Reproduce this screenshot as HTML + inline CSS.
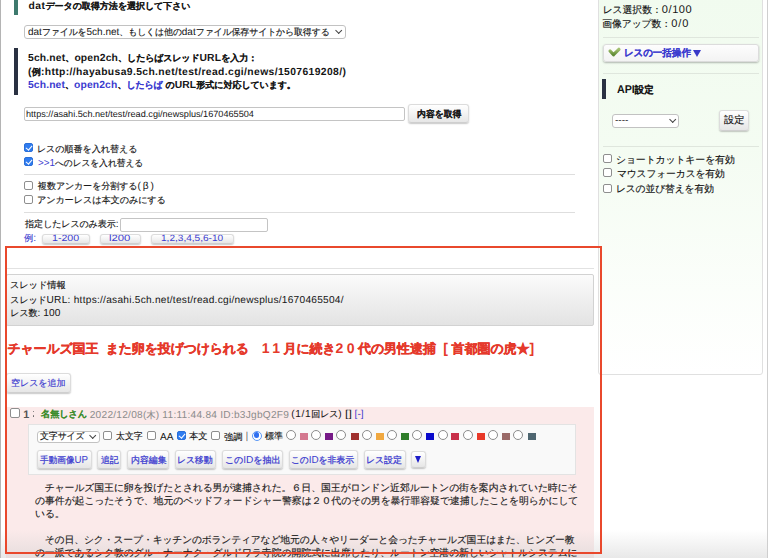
<!DOCTYPE html>
<html lang="ja">
<head>
<meta charset="utf-8">
<style>
*{box-sizing:border-box;margin:0;padding:0}
html,body{width:768px;height:558px;overflow:hidden;background:#fff}
body{font-family:"Liberation Sans", sans-serif;color:#222;position:relative;text-rendering:geometricPrecision}
.a{position:absolute}
.tx{position:absolute;white-space:nowrap;line-height:14px;height:14px;transform-origin:0 50%}
.tx i{display:inline-block;font-style:normal;width:1em;text-align:center}
.tx{-webkit-text-stroke:0.15px currentColor}
.tx.bd{-webkit-text-stroke:0.05px currentColor}
#title{-webkit-text-stroke:0.3px currentColor}
.tx[id^=bt]{-webkit-text-stroke:0.25px currentColor}
.tx .L{-webkit-text-stroke:0}
</style>
</head>
<body>
<div class="box">
<style>
.cb{position:absolute;width:9px;height:9px;border:1px solid #8e8e8e;border-radius:2px;background:#fff}
.cb.on{background:#2f7cf0;border-color:#2a6fd8}
.cb.on::after{content:"";position:absolute;left:2.2px;top:0.3px;width:2.6px;height:5.2px;border:solid #fff;border-width:0 1.6px 1.6px 0;transform:rotate(40deg)}
.ln{position:absolute;height:1px;background:#dedede}
.btn{position:absolute;border:1px solid #dcdcdc;border-bottom-color:#cfcfcf;border-radius:3px;background:linear-gradient(#ffffff,#f3f3f3 50%,#e6e6e6);box-shadow:0 1px 1.5px rgba(0,0,0,.22)}
.sel{position:absolute;border:1px solid #c2c2c2;border-radius:3px;background:#fff}
.chev{position:absolute;width:5.4px;height:5.4px;margin:-0.5px 0 0 -1px;border:solid #444;border-width:0 1.2px 1.2px 0;transform:rotate(45deg)}
.inp{position:absolute;border:1px solid #c4c4c4;border-radius:2px;background:#fff}
.rd{position:absolute;width:10px;height:10px;border:1px solid #8c8c8c;border-radius:50%;background:#fff}
.rd.on{border:1.4px solid #5a98f6}
.rd.on::after{content:"";position:absolute;left:0.8px;top:0.8px;width:5.4px;height:5.4px;border-radius:50%;background:#2f6ff0}
.sq{position:absolute;width:8px;height:7px;top:433px}
</style>
<!-- frame lines -->
<div class="a" style="left:0;top:0;width:1px;height:558px;background:#b4b4b4"></div>
<div class="a" style="left:767px;top:0;width:1px;height:558px;background:#cfcfcf"></div>

<!-- section 1 -->
<div class="a" style="left:14px;top:0;width:4px;height:15px;background:#3e7a6e"></div>
<div class="sel" style="left:24px;top:25px;width:321.5px;height:13.5px"></div>
<div class="chev" style="left:336.5px;top:28.5px"></div>
<div class="a" style="left:14px;top:48px;width:4px;height:47px;background:#2a3142"></div>
<div class="inp" style="left:24px;top:107px;width:381px;height:14px"></div>
<div class="btn" style="left:408px;top:104px;width:61px;height:19px"></div>

<div class="cb on" style="left:24px;top:143px"></div>
<div class="cb on" style="left:24px;top:157px"></div>
<div class="ln" style="left:24px;top:174px;width:551px"></div>
<div class="cb" style="left:24px;top:180.5px"></div>
<div class="cb" style="left:24px;top:195px"></div>
<div class="ln" style="left:24px;top:212px;width:551px"></div>
<div class="inp" style="left:120px;top:218px;width:148px;height:14px"></div>
<div class="btn" style="left:42px;top:233.5px;width:48px;height:10.5px;border-radius:3px"></div>
<div class="btn" style="left:100px;top:233.5px;width:41px;height:10.5px;border-radius:3px"></div>
<div class="btn" style="left:151px;top:233.5px;width:83px;height:10.5px;border-radius:3px"></div>

<!-- sidebar -->
<div class="a" style="left:598px;top:-6px;width:165px;height:381px;border:1px solid #e0e0e0;border-radius:0 0 3px 3px;background:linear-gradient(#f1fbef 0%,#f4fcf2 40%,#ffffff 100%)"></div>
<div class="ln" style="left:603px;top:37px;width:156px;background:#dfe6dd"></div>
<div class="a" style="left:603px;top:44px;width:156px;height:18px;border:1px solid #dcdcdc;border-radius:3px;background:linear-gradient(#fdfdfd,#f3f3f3);box-shadow:0 1px 2px rgba(0,0,0,.28)"></div>
<svg class="a" style="left:604px;top:42px" width="24" height="20" viewBox="0 0 24 20"><defs><linearGradient id="gk" x1="0" y1="0" x2="0" y2="1"><stop offset="0" stop-color="#a2c070"/><stop offset="1" stop-color="#5f8a34"/></linearGradient></defs><path d="M6.1 9 L9.5 12.7 L14.9 7.3" fill="none" stroke="url(#gk)" stroke-width="3.3" stroke-linecap="round" stroke-linejoin="round"/></svg>
<div class="ln" style="left:603px;top:73px;width:156px;background:#dfe6dd"></div>
<div class="a" style="left:602px;top:79px;width:4px;height:20px;background:#2a3142"></div>
<div class="sel" style="left:612px;top:113.5px;width:67px;height:14px"></div>
<div class="chev" style="left:670.5px;top:117px"></div>
<div class="btn" style="left:719px;top:110px;width:30px;height:21px"></div>
<div class="ln" style="left:603px;top:146px;width:156px;background:#dfe6dd"></div>
<div class="cb" style="left:602.5px;top:153.5px"></div>
<div class="cb" style="left:602.5px;top:168px"></div>
<div class="cb" style="left:602.5px;top:183.5px"></div>

<!-- thread -->
<div class="ln" style="left:7px;top:268px;width:587px;background:#e2e2e2"></div>
<div class="a" style="left:6px;top:273.5px;width:587.5px;height:52px;border:1px solid #d2d2d2;border-radius:2px;background:linear-gradient(#fbfbfb,#e3e3e3)"></div>
<div class="btn" style="left:6px;top:373px;width:65px;height:19.5px"></div>

<!-- post -->
<div class="a" style="left:6px;top:407px;width:588px;height:160px;background:#fbeaea"></div>
<div class="cb" style="left:10px;top:408px;width:10px;height:9.5px"></div>
<div class="a" style="left:32.8px;top:410.6px;width:1.6px;height:1.6px;background:#666;border-radius:1px"></div><div class="a" style="left:32.8px;top:415.4px;width:1.6px;height:1.6px;background:#666;border-radius:1px"></div>
<div class="a" style="left:28px;top:424px;width:548px;height:51px;border:1px solid #e3e3e3;background:#f9f9f9"></div>
<div class="sel" style="left:37px;top:431px;width:62.5px;height:12px"></div>
<div class="chev" style="left:90.5px;top:433.5px"></div>
<div class="cb" style="left:103px;top:430.5px"></div>
<div class="cb" style="left:146.5px;top:430.5px"></div>
<div class="cb on" style="left:177px;top:431px"></div>
<div class="cb" style="left:211px;top:430.5px"></div>
<div class="rd on" style="left:252px;top:430.5px"></div>
<div class="rd" style="left:286px;top:430px"></div><div class="sq" style="left:300px;background:#d4788f"></div>
<div class="rd" style="left:311px;top:430px"></div><div class="sq" style="left:325px;background:#761a87"></div>
<div class="rd" style="left:336px;top:430px"></div><div class="sq" style="left:350.5px;background:#a0302e"></div>
<div class="rd" style="left:361.5px;top:430px"></div><div class="sq" style="left:375.5px;background:#f0a840"></div>
<div class="rd" style="left:387px;top:430px"></div><div class="sq" style="left:401px;background:#2e7d2a"></div>
<div class="rd" style="left:412px;top:430px"></div><div class="sq" style="left:426px;background:#0a0acc"></div>
<div class="rd" style="left:437.5px;top:430px"></div><div class="sq" style="left:451px;background:#c8304a"></div>
<div class="rd" style="left:462.5px;top:430px"></div><div class="sq" style="left:476.5px;background:#e83828"></div>
<div class="rd" style="left:488px;top:430px"></div><div class="sq" style="left:502px;background:#9a6a68"></div>
<div class="rd" style="left:513px;top:430px"></div><div class="sq" style="left:527.5px;background:#4e6670"></div>

<div class="btn" style="left:36.5px;top:449.5px;width:55px;height:19.5px"></div>
<div class="btn" style="left:97px;top:449.5px;width:24px;height:19.5px"></div>
<div class="btn" style="left:127px;top:449.5px;width:41.5px;height:19.5px"></div>
<div class="btn" style="left:174.5px;top:449.5px;width:41.5px;height:19.5px"></div>
<div class="btn" style="left:222px;top:449.5px;width:60.5px;height:19.5px"></div>
<div class="btn" style="left:289px;top:449.5px;width:68.5px;height:19.5px"></div>
<div class="btn" style="left:363.5px;top:449.5px;width:42px;height:19.5px"></div>
<div class="btn" style="left:411px;top:450.5px;width:14.5px;height:17.5px"></div>
<div class="a" style="left:414.5px;top:456px;width:0;height:0;border-left:3.6px solid transparent;border-right:3.6px solid transparent;border-top:7.2px solid #1c1cc8"></div>
<div class="a" style="left:693.3px;top:49.8px;width:0;height:0;border-left:4.4px solid transparent;border-right:4.4px solid transparent;border-top:7.4px solid #3838c8"></div>
<div class="a" style="left:0;top:530px;width:768px;height:28px;background:linear-gradient(rgba(225,225,225,0),rgba(205,205,205,.45))"></div>

</div>
<div class="tx bd" id="t1" style="left:28.42px;top:-0.68px;font-size:9.06px;font-weight:bold;color:#151515"><span class="L" style="font-size:1.140em;letter-spacing:0.540px">dat</span><i>デ</i><i>ー</i><i>タ</i><i>の</i><i>取</i><i>得</i><i>方</i><i>法</i><i>を</i><i>選</i><i>択</i><i>し</i><i>て</i><i>下</i><i>さ</i><i>い</i></div>
<div class="tx" id="sel1" style="left:27.86px;top:24.61px;font-size:9.06px;font-weight:normal;color:#151515;transform:scaleX(0.9869)"><span class="L" style="font-size:1.120em;letter-spacing:0.000px">dat</span><i>フ</i><i>ァ</i><i>イ</i><i>ル</i><i>を</i><span class="L" style="font-size:1.120em;letter-spacing:0.000px">5ch.net</span><i>、</i><i>も</i><i>し</i><i>く</i><i>は</i><i>他</i><i>の</i><span class="L" style="font-size:1.120em;letter-spacing:0.000px">dat</span><i>フ</i><i>ァ</i><i>イ</i><i>ル</i><i>保</i><i>存</i><i>サ</i><i>イ</i><i>ト</i><i>か</i><i>ら</i><i>取</i><i>得</i><i>す</i><i>る</i></div>
<div class="tx bd" id="lA" style="left:28.00px;top:50.89px;font-size:9.06px;font-weight:bold;color:#151515"><span class="L" style="font-size:1.140em;letter-spacing:0.176px">5ch.net</span><i>、</i><span class="L" style="font-size:1.140em;letter-spacing:0.176px">open2ch</span><i>、</i><i>し</i><i>た</i><i>ら</i><i>ば</i><i>ス</i><i>レ</i><i>ッ</i><i>ド</i><span class="L" style="font-size:1.140em;letter-spacing:0.176px">URL</span><i>を</i><i>入</i><i>力</i><i>：</i></div>
<div class="tx bd" id="lB" style="left:28.00px;top:64.89px;font-size:9.06px;font-weight:bold;color:#151515"><span class="L" style="font-size:1.140em;letter-spacing:0.391px">(</span><i>例</i><span class="L" style="font-size:1.140em;letter-spacing:0.391px">:http://hayabusa9.5ch.net/test/read.cgi/news/1507619208/)</span></div>
<div class="tx bd" id="lC" style="left:28.00px;top:77.61px;font-size:9.06px;font-weight:bold;color:#151515"><span style="color:#3b3bcf"><span class="L" style="font-size:1.140em;letter-spacing:0.129px">5ch.net</span></span><i>、</i><span style="color:#3b3bcf"><span class="L" style="font-size:1.140em;letter-spacing:0.129px">open2ch</span></span><i>、</i><span style="color:#3b3bcf"><i>し</i><i>た</i><i>ら</i><i>ば</i></span><span class="L" style="font-size:1.140em;letter-spacing:0.129px"> </span><i>の</i><span class="L" style="font-size:1.140em;letter-spacing:0.129px">URL</span><i>形</i><i>式</i><i>に</i><i>対</i><i>応</i><i>し</i><i>て</i><i>い</i><i>ま</i><i>す</i><i>。</i></div>
<div class="tx" id="url" style="left:25.58px;top:107.03px;font-size:9.06px;font-weight:normal;color:#151515;transform:scaleX(1.0092)"><span class="L" style="font-size:1.000em;letter-spacing:0.000px">https://asahi.5ch.net/test/read.cgi/newsplus/1670465504</span></div>
<div class="tx bd" id="bget" style="left:416.58px;top:107.17px;font-size:9.06px;font-weight:bold;color:#151515;transform:scaleX(0.9819)"><i>内</i><i>容</i><i>を</i><i>取</i><i>得</i></div>
<div class="tx" id="cb1" style="left:36.86px;top:141.59px;font-size:9.06px;font-weight:normal;color:#151515;transform:scaleX(1.0079)"><i>レ</i><i>ス</i><i>の</i><i>順</i><i>番</i><i>を</i><i>入</i><i>れ</i><i>替</i><i>え</i><i>る</i></div>
<div class="tx" id="cb2" style="left:37.86px;top:155.75px;font-size:9.06px;font-weight:normal;color:#151515;transform:scaleX(0.9739)"><span style="color:#3b3bcf"><span class="L" style="font-size:1.120em;letter-spacing:0.000px">&gt;&gt;1</span></span><i>へ</i><i>の</i><i>レ</i><i>ス</i><i>を</i><i>入</i><i>れ</i><i>替</i><i>え</i><i>る</i></div>
<div class="tx" id="cb3" style="left:37.86px;top:178.75px;font-size:9.06px;font-weight:normal;color:#151515"><i>複</i><i>数</i><i>ア</i><i>ン</i><i>カ</i><i>ー</i><i>を</i><i>分</i><i>割</i><i>す</i><i>る</i><span class="L" style="font-size:1.120em;letter-spacing:1.920px">(β)</span></div>
<div class="tx" id="cb4" style="left:36.86px;top:192.61px;font-size:9.06px;font-weight:normal;color:#151515;transform:scaleX(1.0166)"><i>ア</i><i>ン</i><i>カ</i><i>ー</i><i>レ</i><i>ス</i><i>は</i><i>本</i><i>文</i><i>の</i><i>み</i><i>に</i><i>す</i><i>る</i></div>
<div class="tx" id="shitei" style="left:24.56px;top:216.75px;font-size:9.06px;font-weight:normal;color:#151515;transform:scaleX(1.0035)"><i>指</i><i>定</i><i>し</i><i>た</i><i>レ</i><i>ス</i><i>の</i><i>み</i><i>表</i><i>示</i><span class="L" style="font-size:1.120em;letter-spacing:0.000px">:</span></div>
<div class="tx" id="rei" style="left:23.72px;top:231.33px;font-size:9.06px;font-weight:normal;color:#3b3bcf;transform:scaleX(1.0119)"><i>例</i><span class="L" style="font-size:1.120em;letter-spacing:0.000px">:</span></div>
<div class="tx" id="b1" style="left:52.14px;top:231.47px;font-size:9.06px;font-weight:normal;color:#3b3bcf;transform:scaleX(1.1743)"><span class="L" style="font-size:1.000em;letter-spacing:0.000px">1-200</span></div>
<div class="tx" id="b2" style="left:109.14px;top:231.47px;font-size:9.06px;font-weight:normal;color:#3b3bcf;transform:scaleX(1.2500)"><span class="L" style="font-size:1.000em;letter-spacing:0.000px">l200</span></div>
<div class="tx" id="b3" style="left:160.58px;top:231.47px;font-size:9.06px;font-weight:normal;color:#3b3bcf;transform:scaleX(1.1132)"><span class="L" style="font-size:1.000em;letter-spacing:0.000px">1,2,3,4,5,6-10</span></div>
<div class="tx" id="s1" style="left:602.70px;top:3.11px;font-size:9.87px;font-weight:normal;color:#151515"><i>レ</i><i>ス</i><i>選</i><i>択</i><i>数</i><i>：</i><span class="L" style="font-size:1.120em;letter-spacing:0.540px">0/100</span></div>
<div class="tx" id="s2" style="left:602.14px;top:17.39px;font-size:9.87px;font-weight:normal;color:#151515"><i>画</i><i>像</i><i>ア</i><i>ッ</i><i>プ</i><i>数</i><i>：</i><span class="L" style="font-size:1.120em;letter-spacing:0.893px">0/0</span></div>
<div class="tx bd" id="s3" style="left:623.72px;top:46.53px;font-size:9.87px;font-weight:bold;color:#3b3bcf;transform:scaleX(0.9699)"><i>レ</i><i>ス</i><i>の</i><i>一</i><i>括</i><i>操</i><i>作</i></div>
<div class="tx bd" id="s4" style="left:616.65px;top:82.75px;font-size:9.87px;font-weight:bold;color:#151515;transform:scaleX(0.9506)"><span class="L" style="font-size:1.140em;letter-spacing:0.000px">API</span><i>設</i><i>定</i></div>
<div class="tx" id="s5" style="left:615.44px;top:113.11px;font-size:9.06px;font-weight:normal;color:#151515;transform:scaleX(1.1159)"><span class="L" style="font-size:1.000em;letter-spacing:0.000px">----</span></div>
<div class="tx" id="s6" style="left:724.00px;top:114.48px;font-size:9.87px;font-weight:normal;color:#151515;transform:scaleX(1.0452)"><i>設</i><i>定</i></div>
<div class="tx" id="s7" style="left:615.56px;top:153.61px;font-size:9.87px;font-weight:normal;color:#151515;transform:scaleX(1.0046)"><i>シ</i><i>ョ</i><i>ー</i><i>ト</i><i>カ</i><i>ッ</i><i>ト</i><i>キ</i><i>ー</i><i>を</i><i>有</i><i>効</i></div>
<div class="tx" id="s8" style="left:616.56px;top:167.75px;font-size:9.87px;font-weight:normal;color:#151515;transform:scaleX(0.9950)"><i>マ</i><i>ウ</i><i>ス</i><i>フ</i><i>ォ</i><i>ー</i><i>カ</i><i>ス</i><i>を</i><i>有</i><i>効</i></div>
<div class="tx" id="s9" style="left:615.56px;top:183.13px;font-size:9.87px;font-weight:normal;color:#151515;transform:scaleX(0.9937)"><i>レ</i><i>ス</i><i>の</i><i>並</i><i>び</i><i>替</i><i>え</i><i>を</i><i>有</i><i>効</i></div>
<div class="tx" id="th1" style="left:10.35px;top:278.47px;font-size:9.06px;font-weight:normal;color:#151515;transform:scaleX(1.0284)"><i>ス</i><i>レ</i><i>ッ</i><i>ド</i><i>情</i><i>報</i></div>
<div class="tx" id="th2" style="left:10.35px;top:293.39px;font-size:9.06px;font-weight:normal;color:#151515"><i>ス</i><i>レ</i><i>ッ</i><i>ド</i><span class="L" style="font-size:1.120em;letter-spacing:0.260px">URL: https://asahi.5ch.net/test/read.cgi/newsplus/1670465504/</span></div>
<div class="tx" id="th3" style="left:10.35px;top:305.75px;font-size:9.06px;font-weight:normal;color:#151515"><i>レ</i><i>ス</i><i>数</i><span class="L" style="font-size:1.120em;letter-spacing:0.080px">: 100</span></div>
<div class="tx bd" id="title" style="left:7.56px;top:341.25px;font-size:13px;font-weight:bold;color:#e5392b"><i>チ</i><i>ャ</i><i>ー</i><i>ル</i><i>ズ</i><i>国</i><i>王</i><span class="L" style="font-size:1.080em;letter-spacing:3.413px"> </span><i>ま</i><i>た</i><i>卵</i><i>を</i><i>投</i><i>げ</i><i>つ</i><i>け</i><i>ら</i><i>れ</i><i>る</i><i>　</i><span class="L" style="font-size:1.080em;letter-spacing:3.413px">11</span><i>月</i><i>に</i><i>続</i><i>き</i><span class="L" style="font-size:1.080em;letter-spacing:3.413px">20</span><i>代</i><i>の</i><i>男</i><i>性</i><i>逮</i><i>捕</i><span class="L" style="font-size:1.080em;letter-spacing:3.413px"> [</span><i>首</i><i>都</i><i>圏</i><i>の</i><i>虎</i><i>★</i><span class="L" style="font-size:1.080em;letter-spacing:3.413px">]</span></div>
<div class="tx" id="kara" style="left:10.70px;top:376.03px;font-size:9.06px;font-weight:normal;color:#3b3bcf;transform:scaleX(1.0064)"><i>空</i><i>レ</i><i>ス</i><i>を</i><i>追</i><i>加</i></div>
<div class="tx bd" id="p1" style="left:23.28px;top:407.54px;font-size:9.06px;font-weight:bold;color:#555"><span class="L" style="font-size:1.200em;letter-spacing:0.000px">1</span></div>
<div class="tx bd" id="p2" style="left:41.44px;top:406.83px;font-size:9.06px;font-weight:bold;color:#3c8c2c;transform:scaleX(1.0128)"><i>名</i><i>無</i><i>し</i><i>さ</i><i>ん</i></div>
<div class="tx" id="p3" style="left:89.72px;top:407.83px;font-size:9.06px;font-weight:normal;color:#8c8c8c"><span class="L" style="font-size:1.120em;letter-spacing:0.258px">2022/12/08(</span><i>木</i><span class="L" style="font-size:1.120em;letter-spacing:0.258px">) 11:11:44.84 ID:b3JgbQ2F9</span></div>
<div class="tx" id="p4" style="left:291.14px;top:407.33px;font-size:9.06px;font-weight:normal;color:#151515"><span class="L" style="font-size:1.120em;letter-spacing:0.648px">(1/1</span><i>回</i><i>レ</i><i>ス</i><span class="L" style="font-size:1.120em;letter-spacing:0.648px">)</span></div>
<div class="tx" id="p5" style="left:345.00px;top:407.03px;font-size:9.06px;font-weight:normal;color:#151515;transform:scaleX(1.2089)"><span class="L" style="font-size:1.120em;letter-spacing:0.000px">[]</span></div>
<div class="tx" id="p6" style="left:354.58px;top:406.83px;font-size:9.06px;font-weight:normal;color:#3b3bcf"><span class="L" style="font-size:1.120em;letter-spacing:0.000px">[-]</span></div>
<div class="tx" id="tsel" style="left:40.28px;top:429.47px;font-size:9.06px;font-weight:normal;color:#151515;transform:scaleX(0.9801)"><i>文</i><i>字</i><i>サ</i><i>イ</i><i>ズ</i></div>
<div class="tx" id="tb1" style="left:115.86px;top:429.47px;font-size:9.06px;font-weight:normal;color:#151515;transform:scaleX(0.9827)"><i>太</i><i>文</i><i>字</i></div>
<div class="tx" id="tb2" style="left:159.72px;top:429.97px;font-size:9.06px;font-weight:normal;color:#151515;transform:scaleX(0.9945)"><span class="L" style="font-size:1.120em;letter-spacing:0.000px">AA</span></div>
<div class="tx" id="tb3" style="left:189.14px;top:428.97px;font-size:9.06px;font-weight:normal;color:#151515;transform:scaleX(1.0238)"><i>本</i><i>文</i></div>
<div class="tx" id="tb4" style="left:224.00px;top:429.97px;font-size:9.06px;font-weight:normal;color:#151515;transform:scaleX(1.0206)"><i>強</i><i>調</i></div>
<div class="tx" id="tb5" style="left:246.28px;top:429.25px;font-size:9.06px;font-weight:normal;color:#151515;transform:scaleX(0.6920)"><span class="L" style="font-size:1.120em;letter-spacing:0.000px">|</span></div>
<div class="tx" id="tb6" style="left:265.00px;top:429.47px;font-size:9.06px;font-weight:normal;color:#151515;transform:scaleX(0.9852)"><i>標</i><i>準</i></div>
<div class="tx" id="bt1" style="left:39.58px;top:452.61px;font-size:9.06px;font-weight:normal;color:#3b3bcf;transform:scaleX(0.9540)"><i>手</i><i>動</i><i>画</i><i>像</i><span class="L" style="font-size:1.120em;letter-spacing:0.000px">UP</span></div>
<div class="tx" id="bt2" style="left:100.56px;top:452.61px;font-size:9.06px;font-weight:normal;color:#3b3bcf;transform:scaleX(0.9796)"><i>追</i><i>記</i></div>
<div class="tx" id="bt3" style="left:130.56px;top:452.61px;font-size:9.06px;font-weight:normal;color:#3b3bcf;transform:scaleX(0.9819)"><i>内</i><i>容</i><i>編</i><i>集</i></div>
<div class="tx" id="bt4" style="left:177.28px;top:452.61px;font-size:9.06px;font-weight:normal;color:#3b3bcf;transform:scaleX(0.9868)"><i>レ</i><i>ス</i><i>移</i><i>動</i></div>
<div class="tx" id="bt5" style="left:224.58px;top:452.61px;font-size:9.06px;font-weight:normal;color:#3b3bcf;transform:scaleX(1.0033)"><i>こ</i><i>の</i><span class="L" style="font-size:1.120em;letter-spacing:0.000px">ID</span><i>を</i><i>抽</i><i>出</i></div>
<div class="tx" id="bt6" style="left:291.28px;top:452.61px;font-size:9.06px;font-weight:normal;color:#3b3bcf;transform:scaleX(0.9787)"><i>こ</i><i>の</i><span class="L" style="font-size:1.120em;letter-spacing:0.000px">ID</span><i>を</i><i>非</i><i>表</i><i>示</i></div>
<div class="tx" id="bt7" style="left:365.58px;top:452.61px;font-size:9.06px;font-weight:normal;color:#3b3bcf;transform:scaleX(0.9916)"><i>レ</i><i>ス</i><i>設</i><i>定</i></div>
<div class="tx" id="bd0" style="left:35.28px;top:482.17px;font-size:9.87px;font-weight:normal;color:#1c1c1c;transform:scaleX(1.0003)"><i>　</i><i>チ</i><i>ャ</i><i>ー</i><i>ル</i><i>ズ</i><i>国</i><i>王</i><i>に</i><i>卵</i><i>を</i><i>投</i><i>げ</i><i>た</i><i>と</i><i>さ</i><i>れ</i><i>る</i><i>男</i><i>が</i><i>逮</i><i>捕</i><i>さ</i><i>れ</i><i>た</i><i>。</i><i>６</i><i>日</i><i>、</i><i>国</i><i>王</i><i>が</i><i>ロ</i><i>ン</i><i>ド</i><i>ン</i><i>近</i><i>郊</i><i>ル</i><i>ー</i><i>ト</i><i>ン</i><i>の</i><i>街</i><i>を</i><i>案</i><i>内</i><i>さ</i><i>れ</i><i>て</i><i>い</i><i>た</i><i>時</i><i>に</i><i>そ</i></div>
<div class="tx" id="bd1" style="left:35.28px;top:495.11px;font-size:9.87px;font-weight:normal;color:#1c1c1c;transform:scaleX(1.0016)"><i>の</i><i>事</i><i>件</i><i>が</i><i>起</i><i>こ</i><i>っ</i><i>た</i><i>そ</i><i>う</i><i>で</i><i>、</i><i>地</i><i>元</i><i>の</i><i>ベ</i><i>ッ</i><i>ド</i><i>フ</i><i>ォ</i><i>ー</i><i>ド</i><i>シ</i><i>ャ</i><i>ー</i><i>警</i><i>察</i><i>は</i><i>２</i><i>０</i><i>代</i><i>の</i><i>そ</i><i>の</i><i>男</i><i>を</i><i>暴</i><i>行</i><i>罪</i><i>容</i><i>疑</i><i>で</i><i>逮</i><i>捕</i><i>し</i><i>た</i><i>こ</i><i>と</i><i>を</i><i>明</i><i>ら</i><i>か</i><i>に</i><i>し</i><i>て</i></div>
<div class="tx" id="bd2" style="left:35.28px;top:507.61px;font-size:9.87px;font-weight:normal;color:#1c1c1c;transform:scaleX(1.0016)"><i>い</i><i>る</i><i>。</i></div>
<div class="tx" id="bd4" style="left:34.56px;top:533.61px;font-size:9.87px;font-weight:normal;color:#1c1c1c;transform:scaleX(0.9949)"><i>　</i><i>そ</i><i>の</i><i>日</i><i>、</i><i>シ</i><i>ク</i><i>・</i><i>ス</i><i>ー</i><i>プ</i><i>・</i><i>キ</i><i>ッ</i><i>チ</i><i>ン</i><i>の</i><i>ボ</i><i>ラ</i><i>ン</i><i>テ</i><i>ィ</i><i>ア</i><i>な</i><i>ど</i><i>地</i><i>元</i><i>の</i><i>人</i><i>々</i><i>や</i><i>リ</i><i>ー</i><i>ダ</i><i>ー</i><i>と</i><i>会</i><i>っ</i><i>た</i><i>チ</i><i>ャ</i><i>ー</i><i>ル</i><i>ズ</i><i>国</i><i>王</i><i>は</i><i>ま</i><i>た</i><i>、</i><i>ヒ</i><i>ン</i><i>ズ</i><i>ー</i><i>教</i></div>
<div class="tx" id="bd5" style="left:35.28px;top:546.61px;font-size:9.87px;font-weight:normal;color:#1c1c1c;transform:scaleX(1.0003)"><i>の</i><i>一</i><i>派</i><i>で</i><i>あ</i><i>る</i><i>シ</i><i>ク</i><i>教</i><i>の</i><i>グ</i><i>ル</i><i>・</i><i>ナ</i><i>ー</i><i>ナ</i><i>ク</i><i>・</i><i>グ</i><i>ル</i><i>ド</i><i>ワ</i><i>ラ</i><i>寺</i><i>院</i><i>の</i><i>開</i><i>院</i><i>式</i><i>に</i><i>出</i><i>席</i><i>し</i><i>た</i><i>り</i><i>、</i><i>ル</i><i>ー</i><i>ト</i><i>ン</i><i>空</i><i>港</i><i>の</i><i>新</i><i>し</i><i>い</i><i>シ</i><i>ャ</i><i>ト</i><i>ル</i><i>シ</i><i>ス</i><i>テ</i><i>ム</i><i>に</i></div>
<div class="box">
<div class="a" style="left:5px;top:246px;width:597px;height:308px;border:2px solid #e9482c"></div>

</div>
</body>
</html>
